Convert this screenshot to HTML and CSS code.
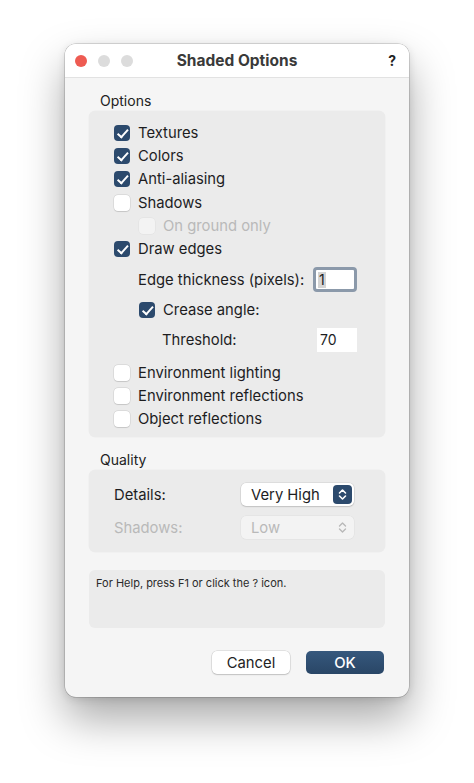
FILE: index.html
```html
<!DOCTYPE html>
<html>
<head>
<meta charset="utf-8">
<link rel="stylesheet" href="styles.css">
</head>
<body>
<div class="stage">
  <div class="window">
    <div class="titlebar">
      <div class="lights">
        <span class="light red"></span>
        <span class="light gray"></span>
        <span class="light gray"></span>
      </div>
      <div class="title">Shaded Options</div>
      <div class="help">?</div>
    </div>
    <div class="content">
      <div class="section-label">Options</div>
      <div class="group options">
        <div class="row"><span class="cb on"></span><span>Textures</span></div>
        <div class="row"><span class="cb on"></span><span>Colors</span></div>
        <div class="row"><span class="cb on"></span><span>Anti-aliasing</span></div>
        <div class="row"><span class="cb"></span><span>Shadows</span></div>
        <div class="row indent disabled"><span class="cb dis"></span><span>On ground only</span></div>
        <div class="row"><span class="cb on"></span><span>Draw edges</span></div>
        <div class="row field edge"><span class="label-in">Edge thickness (pixels):</span><span class="input focus"><span class="sel">1</span></span></div>
        <div class="row indent crease"><span class="cb on"></span><span>Crease angle:</span></div>
        <div class="row field thresh"><span class="label-in2">Threshold:</span><span class="input plain">70</span></div>
        <div class="row env"><span class="cb"></span><span>Environment lighting</span></div>
        <div class="row"><span class="cb"></span><span>Environment reflections</span></div>
        <div class="row"><span class="cb"></span><span>Object reflections</span></div>
      </div>
      <div class="section-label quality-label">Quality</div>
      <div class="group quality">
        <div class="qrow">
          <span class="qlabel">Details:</span>
          <span class="popup"><span class="ptext">Very High</span><span class="stepper"><svg width="11" height="13" viewBox="0 0 11 13"><path d="M2.5 5 L5.5 2 L8.5 5 M2.5 8 L5.5 11 L8.5 8" fill="none" stroke="#fff" stroke-width="1.6" stroke-linecap="round" stroke-linejoin="round"/></svg></span></span>
        </div>
        <div class="qrow disabled">
          <span class="qlabel">Shadows:</span>
          <span class="popup dis"><span class="ptext">Low</span><span class="stepper plain"><svg width="11" height="13" viewBox="0 0 11 13"><path d="M2.5 5 L5.5 2 L8.5 5 M2.5 8 L5.5 11 L8.5 8" fill="none" stroke="#b8b8b8" stroke-width="1.4" stroke-linecap="round" stroke-linejoin="round"/></svg></span></span>
        </div>
      </div>
      <div class="helpbox">For Help, press F1 or click the ? icon.</div>
      <div class="buttons">
        <span class="btn cancel">Cancel</span>
        <span class="btn ok">OK</span>
      </div>
    </div>
  </div>
</div>
</body>
</html>
```
FILE: styles.css
```css
html, body {
  margin: 0;
  padding: 0;
  background: #ffffff;
}
body {
  font-family: Inter, "Liberation Sans", sans-serif;
  color: #1d1d1f;
}
.stage {
  padding: 44px 0 0 65px;
  height: 783px;
  box-sizing: border-box;
}
.window {
  width: 344px;
  height: 653px;
  background: #f5f5f5;
  border-radius: 11px;
  overflow: hidden;
  box-shadow: 0 0 0 0.5px rgba(0,0,0,0.25), 0 22px 44px rgba(0,0,0,0.34), 0 2px 8px rgba(0,0,0,0.12);
  display: flex;
  flex-direction: column;
}
.titlebar {
  height: 33px;
  background: #ffffff;
  border-bottom: 1px solid #e2e2e2;
  display: flex;
  align-items: center;
  position: relative;
  flex-shrink: 0;
}
.lights {
  display: flex;
  gap: 11px;
  padding-left: 10px;
}
.light {
  width: 12px;
  height: 12px;
  border-radius: 50%;
  display: block;
}
.light.red { background: #ee5b52; }
.light.gray { background: #dcdcdc; }
.title {
  position: absolute;
  left: 0;
  right: 0;
  text-align: center;
  font-weight: 700;
  font-size: 15.5px;
  color: #3a3a3a;
  pointer-events: none;
}
.help {
  margin-left: auto;
  margin-right: 13px;
  font-weight: 700;
  font-size: 14px;
  color: #222;
}
.content {
  padding: 0 24px;
  display: flex;
  flex-direction: column;
}
.section-label {
  font-size: 14px;
  padding-left: 11px;
  height: 20px;
  line-height: 20px;
  margin-top: 13px;
  color: #222;
}
.group {
  background: #ebebeb;
  border-radius: 6px;
  box-shadow: 0 0 0 0.5px rgba(0,0,0,0.03);
}
.options {
  padding: 10px 28px 6px 25px;
  height: 326px;
  box-sizing: border-box;
}
.row {
  height: 23.3px;
  display: flex;
  align-items: center;
  font-size: 14.8px;
  white-space: nowrap;
}
.row.indent { padding-left: 25px; }
.row.disabled { color: #b9b9b9; }
.cb {
  width: 16px;
  height: 16px;
  border-radius: 4px;
  background: #ffffff;
  box-shadow: 0 0 0 0.5px rgba(0,0,0,0.12), 0 0.5px 1px rgba(0,0,0,0.1);
  margin-right: 8px;
  flex-shrink: 0;
  position: relative;
  box-sizing: border-box;
}
.cb.on {
  background: #2c4a6d;
  box-shadow: none;
}
.cb.on::after {
  content: "";
  position: absolute;
  left: 5.5px;
  top: 2px;
  width: 4px;
  height: 8.5px;
  border-right: 2.2px solid #fff;
  border-bottom: 2.2px solid #fff;
  transform: rotate(42deg);
}
.cb.dis {
  background: #f3f3f3;
  box-shadow: 0 0 0 0.5px rgba(0,0,0,0.05);
}
.row.field { padding-left: 24px; }
.row.edge { margin-top: 7.5px; }
.row.crease { margin-top: 7px; }
.row.thresh { margin-top: 6px; padding-left: 48px; }
.row.env { margin-top: 10px; }
.input {
  margin-left: auto;
  background: #ffffff;
  box-sizing: border-box;
  display: flex;
  align-items: center;
  font-size: 14px;
}
.input.focus {
  width: 44px;
  height: 25px;
  border: 3.5px solid #8b99aa;
  border-radius: 4px;
  padding-left: 2px;
  margin-right: 0;
}
.sel {
  background: #d4d4d4;
  padding: 0 1px;
  line-height: 16px;
}
.input.plain {
  width: 40px;
  height: 24px;
  padding-left: 3px;
}
.quality-label { margin-top: 13px; }
.quality {
  height: 82px;
  padding: 13px 31px 0 25px;
  box-sizing: border-box;
}
.qrow {
  display: flex;
  align-items: center;
  height: 23px;
  font-size: 14.8px;
}
.qrow + .qrow { margin-top: 10px; }
.qrow.disabled { color: #b9b9b9; }
.qlabel { width: 127px; }
.popup {
  width: 113px;
  height: 23px;
  background: #ffffff;
  border-radius: 5px;
  box-shadow: 0 0 0 0.5px rgba(0,0,0,0.12), 0 1px 1.5px rgba(0,0,0,0.12);
  display: flex;
  align-items: center;
  box-sizing: border-box;
  padding: 0 2px 0 10px;
}
.popup.dis {
  background: #f3f3f3;
  box-shadow: 0 0 0 0.5px rgba(0,0,0,0.05);
}
.ptext { flex: 1; }
.stepper {
  width: 19px;
  height: 19px;
  background: #2c4a6d;
  border-radius: 4px;
  display: flex;
  align-items: center;
  justify-content: center;
}
.stepper.plain { background: transparent; }
.helpbox {
  margin-top: 18px;
  height: 58px;
  background: #ebebeb;
  border-radius: 6px;
  font-size: 11px;
  padding: 6px 7px;
  box-sizing: border-box;
  color: #2a2a2a;
}
.buttons {
  margin-top: 23px;
  display: flex;
  justify-content: flex-end;
  gap: 16px;
  padding-right: 1px;
}
.btn {
  width: 78px;
  height: 23px;
  border-radius: 5px;
  display: flex;
  align-items: center;
  justify-content: center;
  font-size: 14.8px;
}
.cancel {
  background: #ffffff;
  box-shadow: 0 0 0 0.5px rgba(0,0,0,0.15), 0 1px 1.5px rgba(0,0,0,0.15);
  color: #222;
}
.ok {
  background: linear-gradient(#36587d, #294666);
  color: #ffffff;
  font-weight: 500;
}
```
